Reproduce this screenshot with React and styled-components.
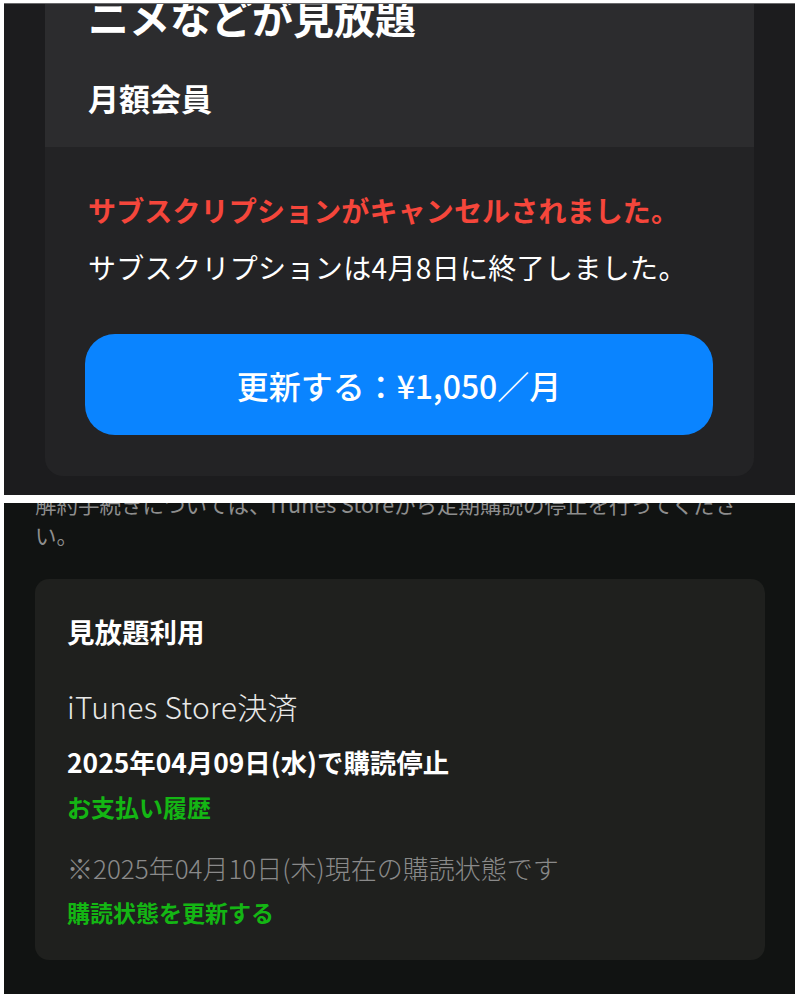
import React from 'react'
import styled, {createGlobalStyle} from 'styled-components'

const GlobalStyle = createGlobalStyle`
    html, body {
        margin: 0;
        padding: 0;
        background: #ffffff;
    }
    body {
        font-family: "Noto Sans CJK JP", "Noto Sans", sans-serif;
        -webkit-font-smoothing: antialiased;
    }
`

export default function App() {
    return (
        <>
            <GlobalStyle/>
            <Page>
                <TopShot>
                    <PlanCard>
                        <PlanHeader>
                            <PlanTitle>ニメなどが見放題</PlanTitle>
                            <PlanName>月額会員</PlanName>
                        </PlanHeader>
                        <PlanBody>
                            <Notice color="#f5463b" weight={700} spacing={0.15}>サブスクリプションがキャンセルされました。</Notice>
                            <Notice color="#ffffff" weight={400} spacing={0.35} gap={21}>サブスクリプションは4月8日に終了しました。</Notice>
                            <RenewButton>更新する：¥1,050／月</RenewButton>
                        </PlanBody>
                    </PlanCard>
                </TopShot>

                <BottomShot>
                    <Note>
                        <NoteLine>解約手続きについては、iTunes Storeから定期購読の停止を行ってくださ</NoteLine>
                        <NoteLine>い。</NoteLine>
                    </Note>
                    <UsageCard>
                        <UsageTitle>見放題利用</UsageTitle>
                        <Method>iTunes Store決済</Method>
                        <StopDate>2025年04月09日(水)で購読停止</StopDate>
                        <GreenLink size={24} gap={11}>お支払い履歴</GreenLink>
                        <AsOf>※2025年04月10日(木)現在の購読状態です</AsOf>
                        <GreenLink size={23} gap={10}>購読状態を更新する</GreenLink>
                    </UsageCard>
                </BottomShot>
            </Page>
        </>
    )
}

//---------------------------STYLES-------------------------------------------//

const Page = styled.div`
        display: flex;
        flex-direction: column;
        gap: 8px;
        padding: 3px 4px 5px;
`
const TopShot = styled.section`
        height: 492px;
        background: #1c1c1e;
        border-top: 1px solid #6a6a6c;
        box-sizing: border-box;
        overflow: hidden;
        padding: 0 41px;
`
const PlanCard = styled.div`
        display: flex;
        flex-direction: column;
        border-radius: 0 0 18px 18px;
        overflow: hidden;
`
const PlanHeader = styled.div`
        height: 143px;
        background: #2c2c2e;
        padding-left: 43px;
        display: flex;
        flex-direction: column;
`
const PlanTitle = styled.h1`
        margin: -12px 0 0;
        font-size: 41px;
        line-height: 48px;
        font-weight: 700;
        color: #ffffff;
        white-space: nowrap;
`
const PlanName = styled.h2`
        margin: 38px 0 0;
        font-size: 31px;
        line-height: 40px;
        font-weight: 700;
        color: #ffffff;
`
const PlanBody = styled.div`
        background: #232325;
        padding: 45px 41px 41px 40px;
        display: flex;
        flex-direction: column;
`
const Notice = styled.p`
        margin: ${p => p.gap || 0}px 0 0;
        padding-left: 3px;
        font-size: 28px;
        line-height: 36px;
        letter-spacing: ${p => p.spacing}px;
        font-weight: ${p => p.weight};
        color: ${p => p.color};
        white-space: nowrap;
`
const RenewButton = styled.button`
        margin-top: 49px;
        height: 101px;
        border: none;
        border-radius: 30px;
        background: #0a84ff;
        color: #ffffff;
        font-family: inherit;
        font-size: 32px;
        font-weight: 500;
        display: flex;
        align-items: center;
        justify-content: center;
`
const BottomShot = styled.section`
        height: 491px;
        background: #111312;
        overflow: hidden;
        padding: 0 30px 0 31px;
        display: flex;
        flex-direction: column;
`
const Note = styled.p`
        margin: -15px 0 0;
        font-size: 21.5px;
        line-height: 31px;
        color: #8e8e8e;
        display: flex;
        flex-direction: column;
`
const NoteLine = styled.span`
        white-space: nowrap;
`
const UsageCard = styled.div`
        margin-top: 29px;
        background: #1f201e;
        border-radius: 14px;
        padding: 34px 32px 32px;
        display: flex;
        flex-direction: column;
`
const UsageTitle = styled.h3`
        margin: 0;
        font-size: 27.5px;
        line-height: 36px;
        font-weight: 700;
        color: #ffffff;
`
const Method = styled.div`
        margin-top: 38px;
        font-size: 30px;
        line-height: 38px;
        letter-spacing: 0.3px;
        font-weight: 300;
        color: #e8e8e8;
`
const StopDate = styled.div`
        margin-top: 19px;
        font-size: 26.4px;
        line-height: 36px;
        font-weight: 700;
        color: #ffffff;
        white-space: nowrap;
`
const GreenLink = styled.a`
        margin-top: ${p => p.gap}px;
        font-size: ${p => p.size}px;
        line-height: 32px;
        font-weight: 700;
        color: #14b614;
        cursor: pointer;
`
const AsOf = styled.div`
        margin-top: 27px;
        font-size: 26px;
        line-height: 36px;
        font-weight: 300;
        color: #8a8a8a;
        white-space: nowrap;
`
